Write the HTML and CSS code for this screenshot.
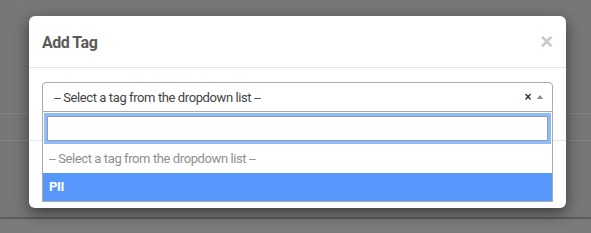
FILE: index.html
```html
<!DOCTYPE html>
<html lang="en">
<head>
    <meta charset="UTF-8">
    <meta name="viewport" content="width=device-width, initial-scale=1.0">
    <title>Add Tag</title>
    <link rel="stylesheet" href="styles.css">
</head>
<body>
    <!-- page behind the backdrop -->
    <div class="page">
        <div class="page-head"></div>
        <div class="page-bar"></div>
        <div class="page-main"></div>
        <div class="page-foot"></div>
    </div>

    <div class="modal-layer">
        <div class="modal">
            <div class="modal-header">
                <h4 class="modal-title">Add Tag</h4>
                <span class="close">&times;</span>
            </div>
            <div class="modal-body">
                <div class="tag-select">
                    <div class="select-box">
                        <span class="select-text">-- Select a tag from the dropdown list --</span>
                        <span class="select-clear">&times;</span>
                        <span class="select-arrow"></span>
                    </div>
                    <div class="select-dropdown">
                        <div class="select-search">
                            <input type="text" class="search-field">
                        </div>
                        <ul class="select-results">
                            <li class="result placeholder">-- Select a tag from the dropdown list --</li>
                            <li class="result highlighted">PII</li>
                        </ul>
                    </div>
                </div>
            </div>
            <div class="modal-footer"></div>
        </div>
    </div>
</body>
</html>
```

FILE: styles.css
```css
body {
    margin: 0;
    font-family: Roboto, "Liberation Sans", sans-serif;
    background-color: #777;
    position: relative;
    height: 233px;
    overflow: hidden;
}

/* background page */
.page-head {
    height: 113px;
    border-bottom: 1px solid #848484;
}

.page-bar {
    height: 26px;
    border-bottom: 1px solid #848484;
}

.page-main {
    height: 76px;
    border-bottom: 2px solid #5c5c5c;
}

.page-foot {
    background-color: #7b7b7b;
    height: 20px;
}

/* modal */
.modal-layer {
    position: absolute;
    top: 0;
    left: 0;
    right: 0;
    bottom: 0;
}

.modal {
    margin: 16px 0 0 29px;
    width: 537px;
    background-color: #fff;
    border-radius: 6px;
    box-shadow: 0 5px 15px rgba(0, 0, 0, 0.5);
}

.modal-header {
    display: flex;
    justify-content: space-between;
    align-items: center;
    padding: 16px 13px 13px 13px;
    border-bottom: 1px solid #e5e5e5;
}

.modal-title {
    margin: 0;
    font-size: 16px;
    line-height: 22px;
    font-weight: bold;
    letter-spacing: -0.5px;
    color: #5a5a5a;
}

.close {
    font-family: "Liberation Sans", Arial, sans-serif;
    font-size: 22px;
    font-weight: bold;
    line-height: 22px;
    color: #c8c8c8;
    margin-top: -3px;
}

.modal-body {
    padding: 14px 13px 28px 13px;
}

.modal-footer {
    height: 67px;
    border-top: 1px solid #e5e5e5;
}

/* select */
.tag-select {
    position: relative;
}

.select-box {
    display: flex;
    align-items: center;
    height: 28px;
    border: 1px solid #aaa;
    border-radius: 4px 4px 0 0;
    padding: 0 9px 0 11px;
    font-size: 13px;
    letter-spacing: -0.4px;
    color: #444;
}

.select-text {
    flex: 1;
}

.select-clear {
    font-family: "Liberation Sans", Arial, sans-serif;
    font-size: 12px;
    font-weight: bold;
    color: #333;
    margin-right: 6px;
}

.select-arrow {
    width: 0;
    height: 0;
    border-left: 3px solid transparent;
    border-right: 3px solid transparent;
    border-bottom: 4px solid #888;
}

.select-dropdown {
    position: absolute;
    top: 30px;
    left: 0;
    right: 0;
    background-color: #fff;
    border: 1px solid #aaa;
    border-top: none;
}

.select-search {
    padding: 4px 4px;
}

.search-field {
    display: block;
    box-sizing: border-box;
    width: 100%;
    height: 25px;
    margin: 0;
    border: 1px solid #8d9db3;
    outline: none;
    box-shadow: 0 0 0 3px #8ebcf6;
}

.select-results {
    list-style: none;
    margin: 0;
    padding: 0;
}

.result {
    height: 28px;
    line-height: 28px;
    padding: 0 6px;
    font-size: 13px;
    letter-spacing: -0.4px;
}

.placeholder {
    color: #8f8f8f;
}

.highlighted {
    background-color: #5897fb;
    color: #fff;
    font-weight: bold;
}
```
